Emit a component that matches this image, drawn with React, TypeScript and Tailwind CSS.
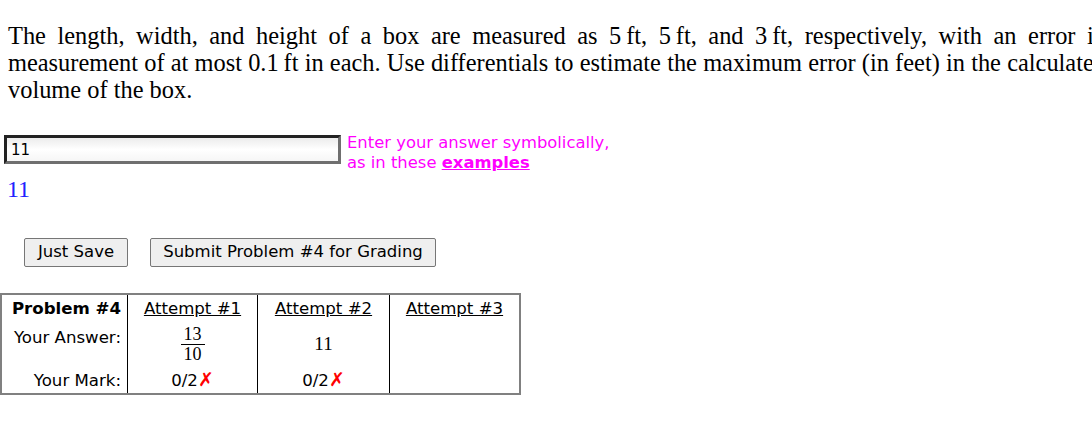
export default function App() {
  const sans = "font-['Verdana','DejaVu_Sans',sans-serif]";
  const serif = "font-['Liberation_Serif','Times_New_Roman',serif]";
  const justLine = "block whitespace-nowrap text-justify [text-align-last:justify]";

  return (
    <div className="w-[1092px] h-[421px] overflow-hidden bg-white text-black">
      <p className={`${serif} ml-[8px] mt-[22px] w-[1098px] text-[24.4px] leading-[27px]`}>
        <span className={justLine}>
          The length, width, and height of a box are measured as 5&thinsp;ft, 5&thinsp;ft, and 3&thinsp;ft, respectively, with an error in
        </span>
        <span className={justLine}>
          measurement of at most 0.1&thinsp;ft in each. Use differentials to estimate the maximum error (in feet) in the calculated
        </span>
        <span className="block">volume of the box.</span>
      </p>

      <div className="mt-[30px] flex items-start">
        <input
          readOnly
          value="11"
          className={`${sans} ml-[4px] mt-[2px] h-[29px] w-[337px] border-[3px] border-t-[#222] border-l-[#222] border-b-[#6f6f6f] border-r-[#6f6f6f] bg-gradient-to-b from-[#ececec] via-white to-[#f6f6f6] px-[4px] text-[15px] text-black outline-none`}
        />
        <div className={`${sans} ml-[6px] text-[16.4px] leading-[20px] text-[#ff00ff]`}>
          <div>Enter your answer symbolically,</div>
          <div>
            as in these <a className="font-bold underline">examples</a>
          </div>
        </div>
      </div>

      <div className={`${serif} ml-[7px] mt-[3px] text-[24px] leading-[26px] text-[#2121ff]`}>11</div>

      <div className={`${sans} ml-[24px] mt-[36px] flex gap-[22px] text-[16.5px]`}>
        <button className="h-[29px] w-[104px] rounded-[2px] border border-[#767676] bg-[#efefef]">Just Save</button>
        <button className="h-[29px] w-[286px] rounded-[2px] border border-[#767676] bg-[#efefef]">
          Submit Problem #4 for Grading
        </button>
      </div>

      <div className={`${sans} mt-[26px] flex w-[521px] border-2 border-[#808080] text-[16.6px]`}>
        <div className="w-[125px] pr-[6px] text-right">
          <div className="flex h-[28px] items-center justify-end font-bold">Problem #4</div>
          <div className="h-[40px] pt-[3px]">Your Answer:</div>
          <div className="flex h-[30px] items-center justify-end pt-[6px]">Your Mark:</div>
        </div>
        {[
          { head: "Attempt #1", ans: "frac", mark: true },
          { head: "Attempt #2", ans: "11", mark: true },
          { head: "Attempt #3", ans: "", mark: false },
        ].map((c, i) => (
          <div key={i} className={`${i === 1 ? "w-[132px]" : "w-[130px]"} border-l border-black text-center`}>
            <div className="flex h-[28px] items-center justify-center">
              <span className="underline">{c.head}</span>
            </div>
            <div className={`${serif} flex h-[40px] items-center justify-center pt-[3px]`}>
              {c.ans === "frac" ? (
                <span className="inline-flex flex-col items-center text-[18px] leading-[17px]">
                  <span className="px-[2px]">13</span>
                  <span className="my-[1px] h-px w-[24px] bg-black" />
                  <span className="px-[2px]">10</span>
                </span>
              ) : (
                <span className="text-[19px]">{c.ans}</span>
              )}
            </div>
            <div className="flex h-[30px] items-center justify-center pt-[6px]">
              {c.mark && (
                <span>
                  0/2<span className="text-[19px] leading-[16px] font-bold text-[#ff0000]">✗</span>
                </span>
              )}
            </div>
          </div>
        ))}
      </div>
    </div>
  );
}
